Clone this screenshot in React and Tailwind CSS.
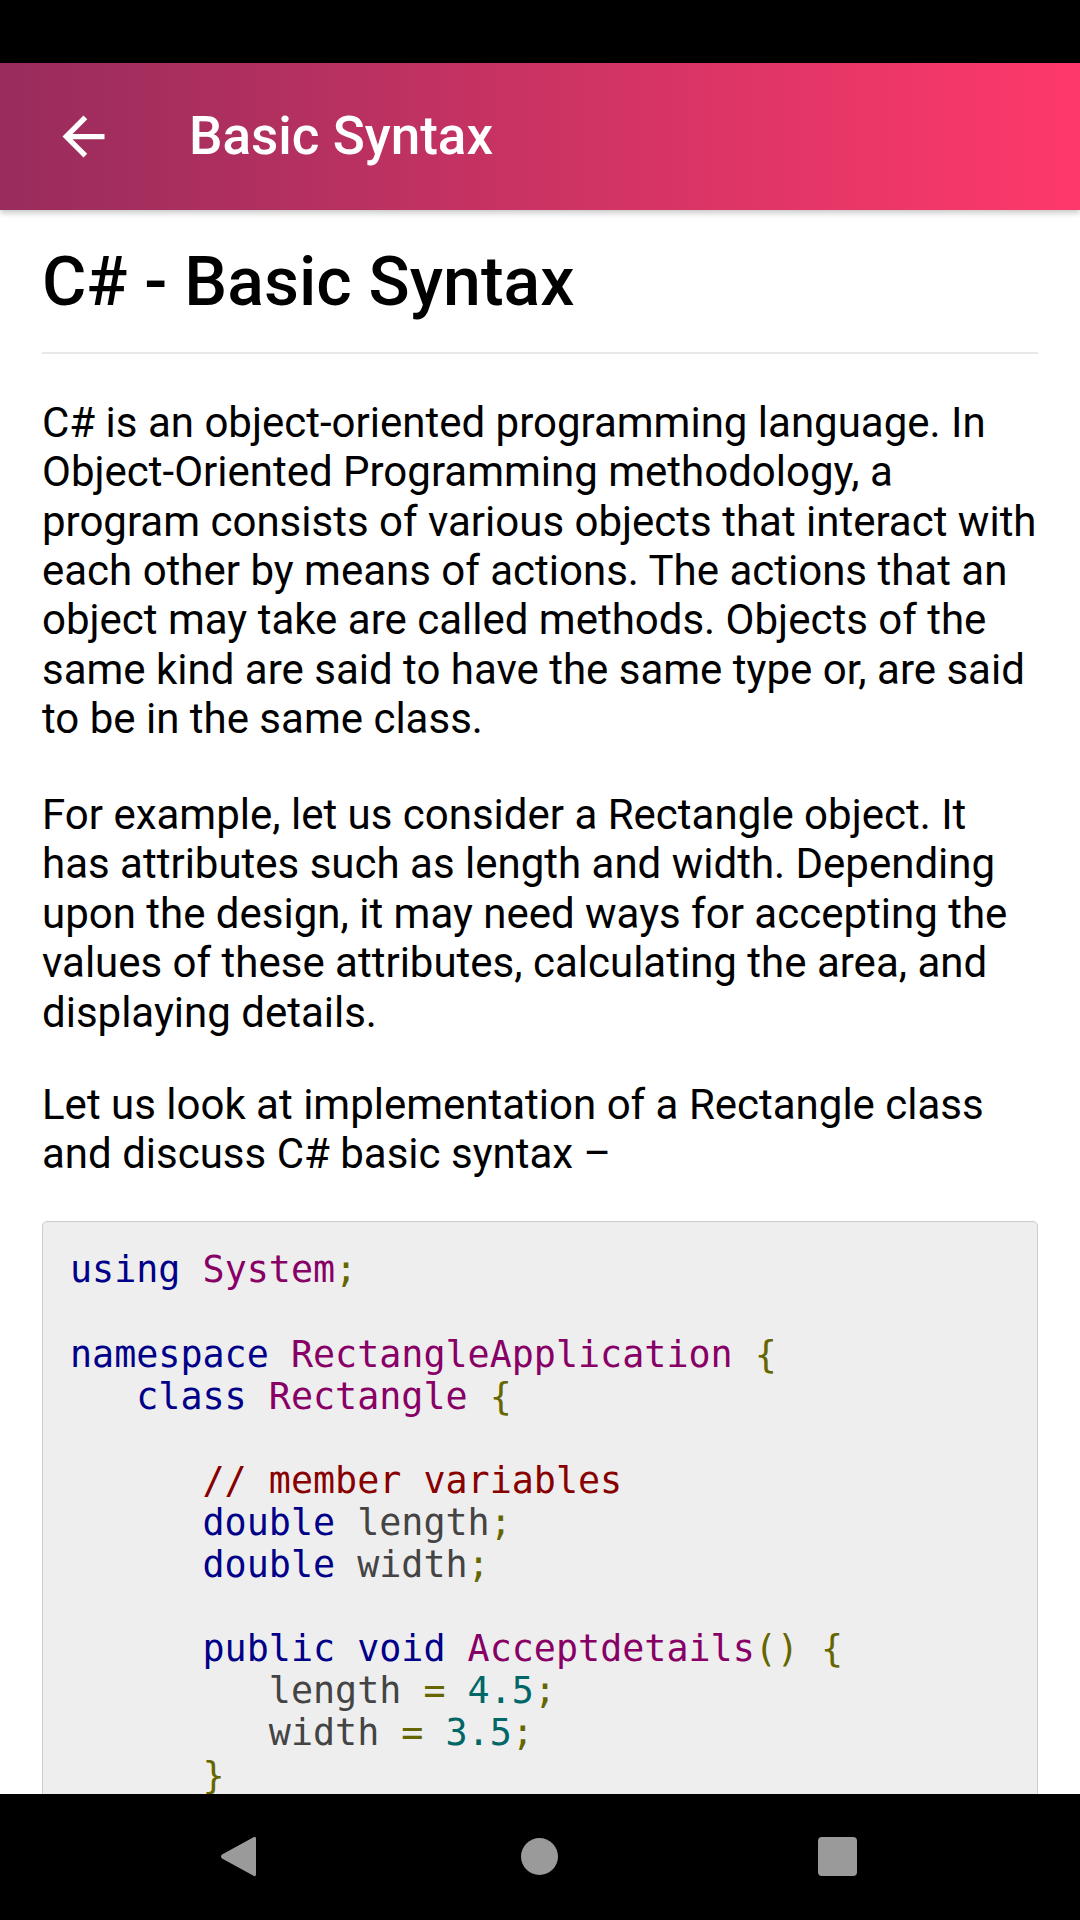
import React from 'react';

// prettify-style colours used on the code sample
const kw = 'text-[#000088]';
const typ = 'text-[#880066]';
const pun = 'text-[#666600]';
const pln = 'text-[#444444]';
const lit = 'text-[#006666]';
const com = 'text-[#880000]';

const codeLines = [
  [['using', kw], [' '], ['System', typ], [';', pun]],
  [],
  [['namespace', kw], [' '], ['RectangleApplication', typ], [' '], ['{', pun]],
  [['   '], ['class', kw], [' '], ['Rectangle', typ], [' '], ['{', pun]],
  [],
  [['      '], ['// member variables', com]],
  [['      '], ['double', kw], [' '], ['length', pln], [';', pun]],
  [['      '], ['double', kw], [' '], ['width', pln], [';', pun]],
  [],
  [['      '], ['public', kw], [' '], ['void', kw], [' '], ['Acceptdetails', typ], ['()', pun], [' '], ['{', pun]],
  [['         '], ['length', pln], [' '], ['=', pun], [' '], ['4.5', lit], [';', pun]],
  [['         '], ['width', pln], [' '], ['=', pun], [' '], ['3.5', lit], [';', pun]],
  [['      '], ['}', pun]],
];

const BackArrow = () => (
  <svg width="63" height="63" viewBox="0 0 24 24" fill="white">
    <path d="M20 11H7.83l5.59-5.59L12 4l-8 8 8 8 1.41-1.41L7.83 13H20v-2z" />
  </svg>
);

const App = () => {
  return (
    <div className="w-[1080px] h-[1920px] flex flex-col overflow-hidden bg-white font-['Roboto',sans-serif]">
      {/* status bar */}
      <div className="h-[63px] bg-black shrink-0" />

      {/* toolbar */}
      <div className="relative z-10 h-[147px] shrink-0 flex items-center bg-gradient-to-r from-[#982c5c] via-[#cb3363] to-[#ff386b] shadow-[0_3px_6px_rgba(0,0,0,0.22)]">
        <div className="ml-[52px] flex items-center">
          <BackArrow />
        </div>
        <h1 className="ml-[74px] text-white text-[53px] font-medium leading-none">Basic Syntax</h1>
      </div>

      {/* article */}
      <div className="flex-1 overflow-hidden px-[42px] text-black">
        <h2 className="mt-[33px] pb-[29px] border-b-2 border-[#e8e8e8] text-[68px] font-medium leading-[79.7px]">
          C# - Basic Syntax
        </h2>

        <p className="mt-[44px] text-[42px] leading-[49.4px]">
          C# is an object-oriented programming language. In Object-Oriented Programming methodology, a program consists of various objects that interact with each other by means of actions. The actions that an object may take are called methods. Objects of the same kind are said to have the same type or, are said to be in the same class.
        </p>
        <p className="mt-[46.5px] text-[42px] leading-[49.4px]">
          For example, let us consider a Rectangle object. It has attributes such as length and width. Depending upon the design, it may need ways for accepting the values of these attributes, calculating the area, and displaying details.
        </p>
        <p className="mt-[43px] text-[42px] leading-[49.4px]">
          Let us look at implementation of a Rectangle class and discuss C# basic syntax –
        </p>

        <pre className="mt-[42px] h-[620px] overflow-hidden bg-[#eeeeee] border border-[#cccccc] rounded-[5px] pl-[27px] pt-[27.5px] font-['DejaVu_Sans_Mono',monospace] text-[36.7px] leading-[42.1px] whitespace-pre">
          {codeLines.map((line, i) => (
            <div key={i} className="h-[42.1px]">
              {line.map(([t, c], j) => (
                <span key={j} className={c || ''}>{t}</span>
              ))}
            </div>
          ))}
        </pre>
      </div>

      {/* navigation bar */}
      <div className="relative h-[126px] shrink-0 bg-black">
        <svg className="absolute left-[219px] top-[41px]" width="38" height="43" viewBox="0 0 38 43">
          <path d="M35 2 Q37 1 37 4 L37 39 Q37 42 35 41 L3 23.5 Q1 21.5 3 19.5 Z" fill="#9a9a9a" />
        </svg>
        <div className="absolute left-[521px] top-[44px] w-[37px] h-[37px] rounded-full bg-[#9a9a9a]" />
        <div className="absolute left-[818px] top-[43px] w-[39px] h-[39px] rounded-[4px] bg-[#9a9a9a]" />
      </div>
    </div>
  );
};

export default App;
